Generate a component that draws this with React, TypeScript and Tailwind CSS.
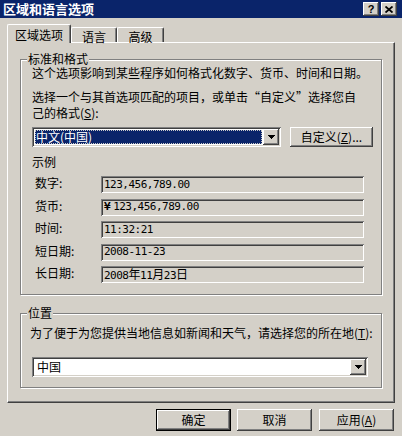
import React from 'react'

const raised =
  'shadow-[inset_-1px_-1px_0_#404040,inset_1px_1px_0_#ffffff,inset_-2px_-2px_0_#808080,inset_2px_2px_0_#d4d0c8]'
const sunken =
  'shadow-[inset_1px_1px_0_#808080,inset_-1px_-1px_0_#ffffff,inset_2px_2px_0_#404040,inset_-2px_-2px_0_#d4d0c8]'
const etched =
  'border border-[#808080] shadow-[inset_1px_1px_0_#ffffff,1px_1px_0_#ffffff]'

function Arrow() {
  return (
    <svg width="7" height="4" viewBox="0 0 7 4" shapeRendering="crispEdges">
      <rect x="0" y="0" width="7" height="1" fill="#000" />
      <rect x="1" y="1" width="5" height="1" fill="#000" />
      <rect x="2" y="2" width="3" height="1" fill="#000" />
      <rect x="3" y="3" width="1" height="1" fill="#000" />
    </svg>
  )
}

function DropButton() {
  return (
    <div className={`flex h-full w-[16px] shrink-0 items-center justify-center bg-[#d4d0c8] ${raised}`}>
      <Arrow />
    </div>
  )
}

function Cjk({ children }: { children: React.ReactNode }) {
  return <span className="font-['Noto_Sans_CJK_SC',sans-serif] text-[12px]">{children}</span>
}

const rows: { label: string; value: React.ReactNode }[] = [
  { label: '数字:', value: '123,456,789.00' },
  {
    label: '货币:',
    value: (
      <>
        <span className="mr-[3px] font-bold">¥</span>123,456,789.00
      </>
    ),
  },
  { label: '时间:', value: '11:32:21' },
  { label: '短日期:', value: '2008-11-23' },
  {
    label: '长日期:',
    value: (
      <>
        2008<Cjk>年</Cjk>11<Cjk>月</Cjk>23<Cjk>日</Cjk>
      </>
    ),
  },
]

export default function App() {
  return (
    <div
      lang="zh-CN"
      className="h-[436px] w-[402px] overflow-hidden bg-[#d4d0c8] font-['Noto_Sans_CJK_SC',sans-serif] text-[12px] leading-[14px] text-black"
    >
      {/* title bar */}
      <div className="flex h-[18px] items-center justify-between bg-[#0a246a] pl-[3px] pr-[5px]">
        <span className="text-[13px] font-bold leading-[14px] text-white">区域和语言选项</span>
        <div className="flex gap-[2px]">
          <div className={`flex h-[14px] w-[16px] items-center justify-center bg-[#d4d0c8] ${raised}`}>
            <span className="font-['Liberation_Sans',sans-serif] text-[11px] font-bold leading-[11px]">?</span>
          </div>
          <div className={`flex h-[14px] w-[16px] items-center justify-center bg-[#d4d0c8] ${raised}`}>
            <svg width="8" height="7" viewBox="0 0 8 7">
              <path d="M0.5 0.5L7.5 6.5M7.5 0.5L0.5 6.5" stroke="#000" strokeWidth="1.8" />
            </svg>
          </div>
        </div>
      </div>

      {/* tabs */}
      <div className="ml-[7px] mt-[6px] flex h-[18px] items-end">
        <div className="relative z-10 mb-[-1px] h-[19px] w-[64px] rounded-t-[2px] border-l border-r border-t border-white border-r-[#404040] bg-[#d4d0c8] pl-[7px] pt-[3px] shadow-[inset_-1px_0_0_#808080]">
          区域选项
        </div>
        <div className="h-[15px] w-[46px] rounded-t-[2px] border-l border-r border-t border-white border-r-[#404040] pt-[2px] text-center shadow-[inset_-1px_0_0_#808080]">
          语言
        </div>
        <div className="h-[15px] w-[47px] rounded-t-[2px] border-l border-r border-t border-white border-r-[#404040] pt-[2px] text-center shadow-[inset_-1px_0_0_#808080]">
          高级
        </div>
      </div>

      {/* tab panel */}
      <div className="ml-[7px] h-[361px] w-[388px] border border-white border-b-[#404040] border-r-[#404040] pl-[12px] pt-[16px] shadow-[inset_-1px_-1px_0_#808080]">
        {/* 标准和格式 */}
        <div className={`relative h-[236px] w-[362px] pl-[11px] pt-[6px] ${etched}`}>
          <span className="absolute left-[6px] top-[-7px] bg-[#d4d0c8] px-[1px] leading-[12px]">标准和格式</span>
          <p>这个选项影响到某些程序如何格式化数字、货币、时间和日期。</p>
          <p className="mt-[9px] leading-[16px]">
            选择一个与其首选项匹配的项目，或单击“自定义”选择您自
            <br />
            己的格式(<u>S</u>):
          </p>
          <div className="mt-[6px] flex">
            <div className={`flex h-[20px] w-[249px] bg-[#d4d0c8] p-[2px] ${sunken}`}>
              <div className="flex-1 bg-white p-[1px]">
                <div className="h-full bg-[#0a246a] pl-[1px] text-white outline-1 -outline-offset-1 outline-dotted outline-[#c8c8c8]">
                  中文(中国)
                </div>
              </div>
              <DropButton />
            </div>
            <button
              className={`ml-[9px] h-[20px] w-[83px] bg-[#d4d0c8] leading-[14px] ${raised}`}
            >
              自定义(<u>Z</u>)...
            </button>
          </div>
          <p className="mt-[8px]">示例</p>
          <div className="mt-[7px] flex flex-col gap-[5.5px]">
            {rows.map((r) => (
              <div key={r.label} className="flex items-start">
                <span className="ml-[3px] w-[66px]">{r.label}</span>
                <div
                  className={`flex h-[17px] w-[263px] items-center overflow-hidden pl-[3px] font-['DejaVu_Sans_Mono',monospace] text-[11px] tracking-[-0.5px] ${sunken}`}
                >
                  <span className="whitespace-nowrap">{r.value}</span>
                </div>
              </div>
            ))}
          </div>
        </div>

        {/* 位置 */}
        <div className={`relative mt-[18px] h-[75px] w-[362px] pl-[9px] pt-[12px] ${etched}`}>
          <span className="absolute left-[6px] top-[-7px] bg-[#d4d0c8] px-[1px] leading-[12px]">位置</span>
          <p>为了便于为您提供当地信息如新闻和天气，请选择您的所在地(<u>T</u>):</p>
          <div className={`ml-[2px] mt-[17px] flex h-[20px] w-[336px] bg-white p-[2px] ${sunken}`}>
            <div className="flex-1 pl-[3px] leading-[16px]">中国</div>
            <DropButton />
          </div>
        </div>
      </div>

      {/* bottom buttons */}
      <div className="mt-[6px] flex justify-end pr-[8px]">
        <button className="h-[22px] w-[75px] border border-black bg-[#d4d0c8] shadow-[inset_-1px_-1px_0_#404040,inset_1px_1px_0_#ffffff,inset_-2px_-2px_0_#808080]">
          确定
        </button>
        <button className={`ml-[6px] h-[22px] w-[75px] bg-[#d4d0c8] ${raised}`}>取消</button>
        <button className={`ml-[7px] h-[22px] w-[75px] bg-[#d4d0c8] ${raised}`}>
          应用(<u>A</u>)
        </button>
      </div>
    </div>
  )
}
